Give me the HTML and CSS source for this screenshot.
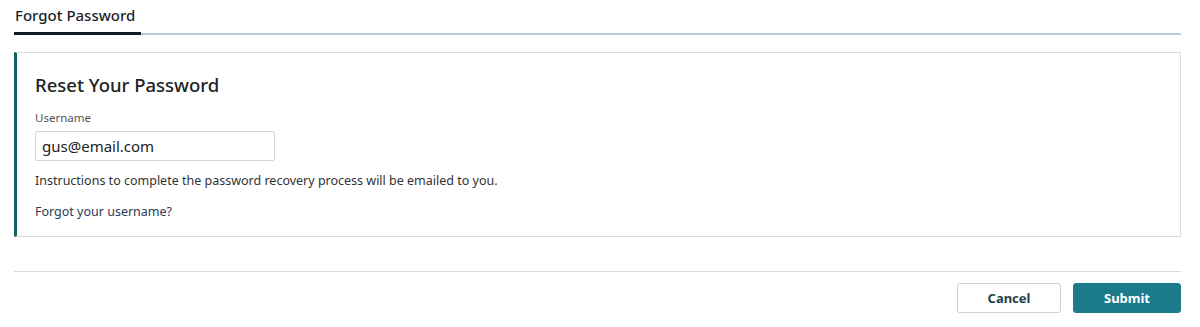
FILE: index.html
```html
<!DOCTYPE html>
<html>
<head>
<meta charset="utf-8">
<link rel="stylesheet" href="styles.css">
</head>
<body>
<div class="page">
  <div class="tabs">
    <div class="tab active">Forgot Password</div>
    <div class="tab-rest"></div>
  </div>
  <div class="card">
    <h1 class="title">Reset Your Password</h1>
    <label class="label">Username</label>
    <div class="input">gus@email.com</div>
    <p class="info">Instructions to complete the password recovery process will be emailed to you.</p>
    <a class="link">Forgot your username?</a>
  </div>
  <div class="divider"></div>
  <div class="actions">
    <button class="btn btn-cancel">Cancel</button>
    <button class="btn btn-submit">Submit</button>
  </div>
</div>
</body>
</html>
```

FILE: styles.css
```css
html, body {
  margin: 0;
  padding: 0;
  background: #ffffff;
}
body {
  font-family: "Noto Sans", "Open Sans", sans-serif;
  color: #222;
}
.page {
  padding: 0 19px 0 14px;
}
.tabs {
  display: flex;
  align-items: flex-end;
  height: 35px;
}
.tab.active {
  width: 127px;
  box-sizing: border-box;
  padding-left: 1px;
  padding-top: 5px;
  font-size: 15px;
  font-weight: 500;
  color: #1b1f2a;
  height: 35px;
  border-bottom: 3px solid #141a2b;
  line-height: 20px;
  white-space: nowrap;
}
.tab-rest {
  flex: 1;
  height: 0;
  border-bottom: 2px solid #b4cfdf;
}
.card {
  margin-top: 17px;
  border: 1px solid #dcdcdc;
  border-left: 3px solid #1a5f66;
  padding: 20px 18px 22px 18px;
  height: 185px;
  box-sizing: border-box;
}
.title {
  margin: 0;
  font-size: 18.5px;
  font-weight: 500;
  color: #222;
  line-height: 24px;
}
.label {
  display: block;
  margin-top: 14px;
  font-size: 11.5px;
  color: #555;
  line-height: 14px;
}
.input {
  margin-top: 6px;
  width: 240px;
  height: 30px;
  box-sizing: border-box;
  border: 1px solid #d6d6d6;
  border-radius: 2px;
  padding: 0 6px;
  font-size: 15px;
  line-height: 28px;
  color: #222;
}
.info {
  margin: 11px 0 0 0;
  font-size: 12.5px;
  line-height: 17px;
  color: #333;
}
.link {
  display: block;
  margin-top: 14px;
  font-size: 12.5px;
  line-height: 17px;
  color: #2b3a55;
}
.divider {
  margin-top: 34px;
  border-top: 1px solid #dadada;
}
.actions {
  display: flex;
  justify-content: flex-end;
  gap: 12px;
  margin-top: 11px;
}
.btn {
  height: 30px;
  font-family: "Noto Sans", "Open Sans", sans-serif;
  font-size: 13px;
  font-weight: 700;
  border-radius: 3px;
  cursor: pointer;
}
.btn-cancel {
  width: 104px;
  background: #fff;
  border: 1px solid #cfcfcf;
  color: #1f3f4a;
}
.btn-submit {
  width: 108px;
  background: #1c7b8a;
  border: 1px solid #1c7b8a;
  color: #fff;
}
```
